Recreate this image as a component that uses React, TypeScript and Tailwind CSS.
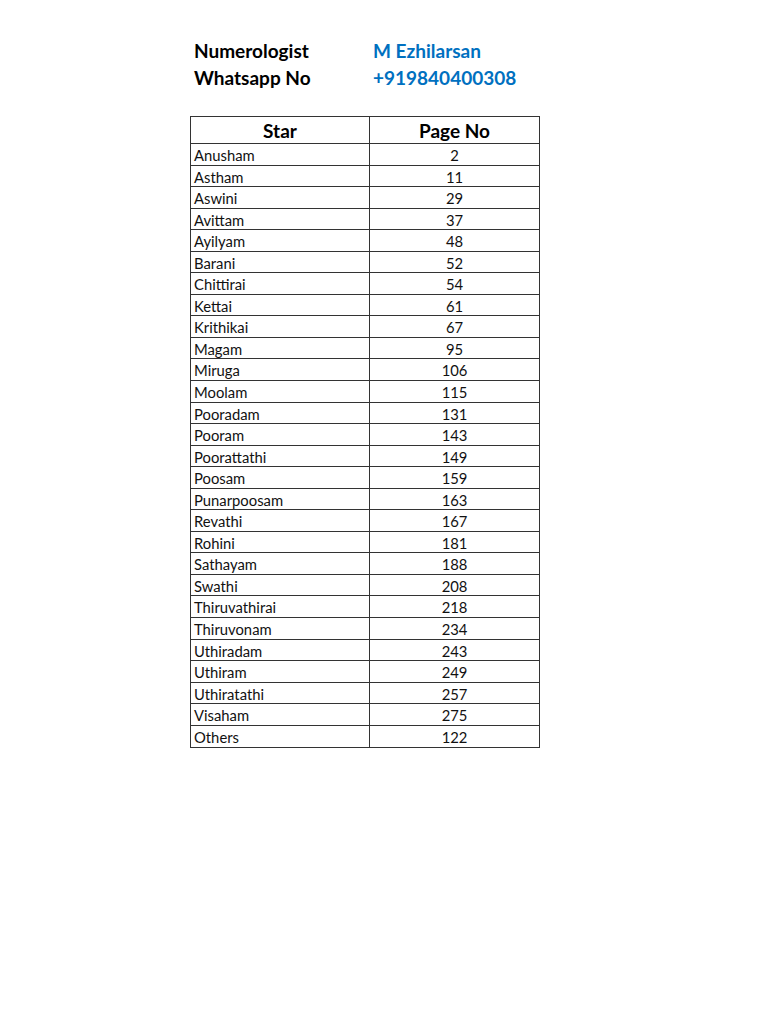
const rows: [string, number][] = [
  ['Anusham', 2],
  ['Astham', 11],
  ['Aswini', 29],
  ['Avittam', 37],
  ['Ayilyam', 48],
  ['Barani', 52],
  ['Chittirai', 54],
  ['Kettai', 61],
  ['Krithikai', 67],
  ['Magam', 95],
  ['Miruga', 106],
  ['Moolam', 115],
  ['Pooradam', 131],
  ['Pooram', 143],
  ['Poorattathi', 149],
  ['Poosam', 159],
  ['Punarpoosam', 163],
  ['Revathi', 167],
  ['Rohini', 181],
  ['Sathayam', 188],
  ['Swathi', 208],
  ['Thiruvathirai', 218],
  ['Thiruvonam', 234],
  ['Uthiradam', 243],
  ['Uthiram', 249],
  ['Uthiratathi', 257],
  ['Visaham', 275],
  ['Others', 122],
];

export default function App() {
  return (
    <div className="min-h-[1024px] w-[768px] bg-white text-black font-['Lato','Liberation_Sans',sans-serif]">
      <div className="pl-[194px] pt-[37px]">
        <div className="grid grid-cols-[179px_1fr] text-[19px] font-bold leading-[27px]">
          <span>Numerologist</span>
          <span className="text-[#0070c0]">M Ezhilarsan</span>
          <span>Whatsapp No</span>
          <span className="text-[#0070c0]">+919840400308</span>
        </div>
      </div>

      {/* star / page table */}
      <div className="ml-[190px] mt-[25px] w-[350px] border border-[#333]">
        <div className="grid h-[27px] grid-cols-[179px_1fr] border-b border-[#333] text-[19px] font-bold">
          <div className="flex items-center justify-center border-r border-[#333]">Star</div>
          <div className="flex items-center justify-center">Page No</div>
        </div>
        {rows.map(([star, page], i) => (
          <div
            key={star}
            className={`grid h-[21.55px] grid-cols-[179px_1fr] text-[14.8px] text-[#111] ${i < rows.length - 1 ? 'border-b border-[#333]' : ''}`}
          >
            <div className="flex items-center border-r border-[#333] pl-[3px]">{star}</div>
            <div className="flex items-center justify-center">{page}</div>
          </div>
        ))}
      </div>
    </div>
  );
}
